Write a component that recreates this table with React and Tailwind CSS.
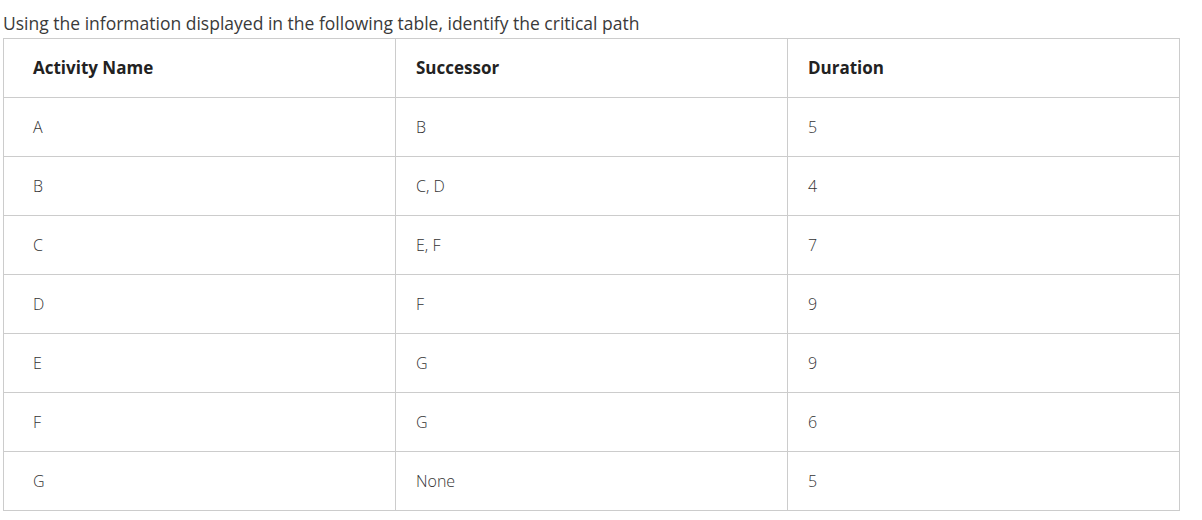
import React from "react";

const rows = [
  { name: "A", successor: "B", duration: "5" },
  { name: "B", successor: "C, D", duration: "4" },
  { name: "C", successor: "E, F", duration: "7" },
  { name: "D", successor: "F", duration: "9" },
  { name: "E", successor: "G", duration: "9" },
  { name: "F", successor: "G", duration: "6" },
  { name: "G", successor: "None", duration: "5" },
];

export default function App() {
  return (
    <div className="min-h-[520px] bg-white pl-[3px] pt-[11px] font-['Open_Sans',sans-serif] text-[#333]">
      <p className="text-[17.5px] leading-[25px] mb-[2px] text-[#3a3a3a]">
        Using the information displayed in the following table, identify the critical path
      </p>
      <table className="w-[1177px] table-fixed border-collapse border border-[#ccc]">
        <thead>
          <tr className="h-[59px]">
            <th className="w-1/3 border border-[#ccc] pl-[29px] text-left text-[17px] font-bold text-[#222]">
              Activity Name
            </th>
            <th className="w-1/3 border border-[#ccc] pl-[20px] text-left text-[17px] font-bold text-[#222]">
              Successor
            </th>
            <th className="w-1/3 border border-[#ccc] pl-[20px] text-left text-[17px] font-bold text-[#222]">
              Duration
            </th>
          </tr>
        </thead>
        <tbody>
          {rows.map((r) => (
            <tr key={r.name} className="h-[59px] text-[16px] font-light text-[#333]">
              <td className="border border-[#ccc] pl-[29px]">{r.name}</td>
              <td className="border border-[#ccc] pl-[20px]">{r.successor}</td>
              <td className="border border-[#ccc] pl-[20px]">{r.duration}</td>
            </tr>
          ))}
        </tbody>
      </table>
    </div>
  );
}
